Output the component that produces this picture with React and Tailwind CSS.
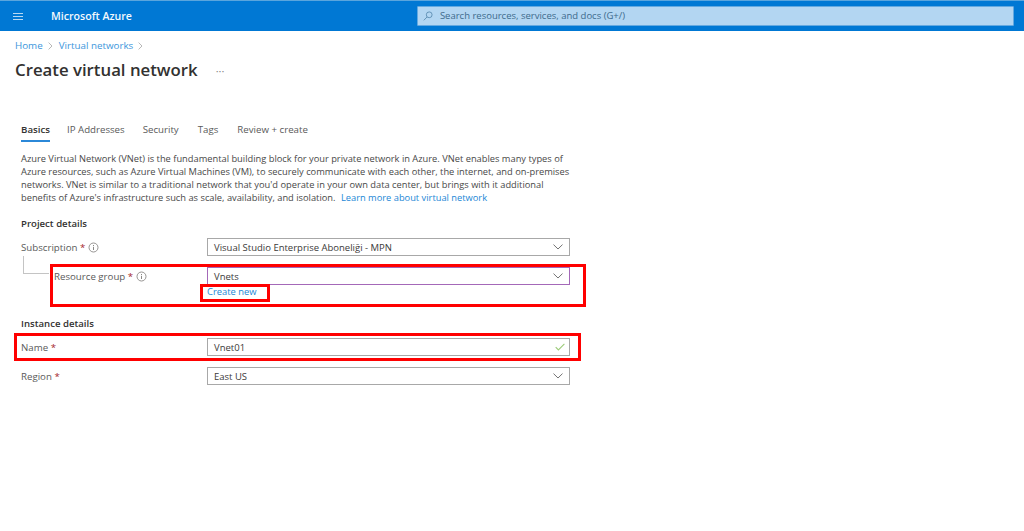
import React from "react";

const Info = () => (
  <svg width="11" height="11" viewBox="0 0 11 11" fill="none" className="shrink-0">
    <circle cx="5.5" cy="5.5" r="4.5" stroke="#8a8886" strokeWidth="0.9" />
    <rect x="5" y="4.8" width="1" height="3.2" fill="#8a8886" />
    <rect x="5" y="3" width="1" height="1" fill="#8a8886" />
  </svg>
);

const Chevron = () => (
  <svg width="10" height="6" viewBox="0 0 10 6" fill="none" className="shrink-0 mr-[1px]">
    <path d="M0.5 0.6L5 5L9.5 0.6" stroke="#737373" strokeWidth="1" />
  </svg>
);

const Check = () => (
  <svg width="10" height="8" viewBox="0 0 10 8" fill="none" className="shrink-0 -mr-[1px]">
    <path d="M0.7 4.2L3.4 7L9.4 0.8" stroke="#9ccb7a" strokeWidth="1.1" />
  </svg>
);

const Field = ({ value, icon, border = "border-[#a8a8a8]" }) => (
  <div className={`w-[363px] h-[18px] border ${border} flex items-center justify-between pl-[6px] pr-[5px] text-[9.5px] leading-none text-[#3b3a39]`}>
    <span className="pt-[1px]">{value}</span>
    {icon}
  </div>
);

const Label = ({ text, info }) => (
  <div className="flex items-center gap-[3px] pt-[1px] text-[9.7px] leading-none text-[#5a5a5a]">
    <span>
      {text} <span className="text-[#a4262c]">*</span>
    </span>
    {info && <Info />}
  </div>
);

export default function App() {
  return (
    <div className="relative w-[1024px] h-[531px] overflow-hidden bg-white" style={{ fontFamily: '"Open Sans", "Noto Sans", sans-serif' }}>
      <header className="h-[31px] bg-[#0078d4] border-t border-[#5aa5dd] flex items-center text-white">
        <div className="ml-[13px] w-[10px] flex flex-col gap-[2px]">
          <span className="h-px bg-[#b8d8f2]" />
          <span className="h-px bg-[#b8d8f2]" />
          <span className="h-px bg-[#b8d8f2]" />
        </div>
        <span className="ml-[28px] text-[10.6px] font-semibold leading-none text-[#f3f9fd]">Microsoft Azure</span>
        <div className="ml-[285px] w-[597px] h-[20px] bg-[#b3d6f2] border border-[#64a9e0] rounded-[1px] flex items-center pl-[5px] gap-[7px] text-[#3d6a8c] text-[9.5px] leading-none">
          <svg width="10" height="10" viewBox="0 0 10 10" fill="none" className="shrink-0">
            <circle cx="6.2" cy="3.8" r="2.9" stroke="#5c8db2" strokeWidth="0.9" />
            <path d="M4 6L0.8 9.3" stroke="#5c8db2" strokeWidth="0.9" />
          </svg>
          <span>Search resources, services, and docs (G+/)</span>
        </div>
      </header>

      <main className="pl-[15px]">
        <nav className="pt-[9px] h-[21px] flex items-center gap-[5px] text-[9.8px] leading-none text-[#3b96dc]">
          <span>Home</span>
          <svg width="5" height="8" viewBox="0 0 5 8" fill="none"><path d="M0.6 0.6L4 4L0.6 7.4" stroke="#a6a6a6" strokeWidth="0.8" /></svg>
          <span className="ml-[1px]">Virtual networks</span>
          <svg width="5" height="8" viewBox="0 0 5 8" fill="none"><path d="M0.6 0.6L4 4L0.6 7.4" stroke="#a6a6a6" strokeWidth="0.8" /></svg>
        </nav>

        <div className="mt-[7px] h-[22px] flex items-center">
          <h1 className="text-[16.8px] font-semibold leading-none text-[#323130]">Create virtual network</h1>
          <span className="ml-[18px] text-[11px] leading-none text-[#8a8886]">···</span>
        </div>

        <div className="ml-[6px] w-[549px]">
          <div className="mt-[42px] flex gap-[18px] text-[9.7px] leading-none text-[#5a5a5a]">
            <div className="relative h-[20px] pt-[2px] font-semibold text-[#323130]">
              Basics
              <span className="absolute left-0 right-0 bottom-[1px] h-[2px] bg-[#2b88d8]" />
            </div>
            <div className="pt-[2px] -ml-[1px]">IP Addresses</div>
            <div className="pt-[2px]">Security</div>
            <div className="pt-[2px] ml-[1px]">Tags</div>
            <div className="pt-[2px] ml-[1px]">Review + create</div>
          </div>

          <p className="mt-[9px] text-[9.3px] leading-[13px] text-[#484848] whitespace-nowrap">
            Azure Virtual Network (VNet) is the fundamental building block for your private network in Azure. VNet enables many types of<br />
            Azure resources, such as Azure Virtual Machines (VM), to securely communicate with each other, the internet, and on-premises<br />
            networks. VNet is similar to a traditional network that you'd operate in your own data center, but brings with it additional<br />
            benefits of Azure's infrastructure such as scale, availability, and isolation.{"  "}
            <span className="ml-[3px] text-[#1b87d6]">Learn more about virtual network</span>
          </p>

          <h2 className="mt-[15px] h-[12px] text-[9.6px] font-semibold leading-none text-[#323130]">Project details</h2>

          <div className="mt-[7px] h-[18px] flex items-center justify-between">
            <Label text="Subscription" info />
            <Field value="Visual Studio Enterprise Aboneliği - MPN" icon={<Chevron />} />
          </div>

          <div className="relative mt-[11px] h-[18px] flex items-center justify-between">
            <div className="absolute left-[2px] -top-[11px] w-[26px] h-[18px] border-l border-b border-[#c4c4c4]" />
            <div className="pl-[33px]">
              <Label text="Resource group" info />
            </div>
            <Field value="Vnets" icon={<Chevron />} border="border-[#a468b8]" />
          </div>

          <div className="pl-[186px] mt-[1px] h-[12px] text-[9.4px] leading-[12px] text-[#1b87d6]">Create new</div>

          <h2 className="mt-[21px] h-[12px] text-[9.6px] font-semibold leading-none text-[#323130]">Instance details</h2>

          <div className="mt-[7px] h-[18px] flex items-center justify-between">
            <Label text="Name" />
            <Field value="Vnet01" icon={<Check />} />
          </div>

          <div className="mt-[11px] h-[18px] flex items-center justify-between">
            <Label text="Region" />
            <Field value="East US" icon={<Chevron />} />
          </div>
        </div>
      </main>

      <div className="absolute left-[50px] top-[264px] w-[536px] h-[43px] border-[3px] border-[#ff0000]" />
      <div className="absolute left-[200px] top-[284px] w-[70px] h-[18px] border-[3px] border-[#ff0000]" />
      <div className="absolute left-[14px] top-[333px] w-[567px] h-[28px] border-[3px] border-[#ff0000]" />
    </div>
  );
}
